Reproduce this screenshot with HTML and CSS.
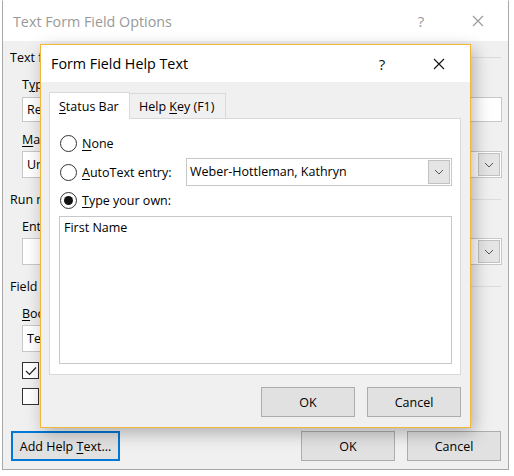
FILE: index.html
```html
<!DOCTYPE html>
<html>
<head>
<meta charset="utf-8">
<link rel="stylesheet" href="styles.css">
</head>
<body>
<div class="win outer">
  <div class="titlebar">
    <span class="wtitle">Text Form Field Options</span>
    <span class="tbtn help">?</span>
    <span class="tbtn close"><svg width="12" height="12" viewBox="0 0 12 12"><path d="M1 1 L11 11 M11 1 L1 11" stroke="#999" stroke-width="1.1" fill="none"/></svg></span>
  </div>
  <div class="obody">
    <div class="group"><span class="glabel">Text form field</span><span class="sep"></span></div>
    <div class="cols">
      <div class="col">
        <div class="flabel">T<u>y</u>pe:</div>
        <div class="field">Regular text</div>
        <div class="flabel second"><u>M</u>aximum length:</div>
        <div class="field sel"><span class="val">Unlimited</span><span class="dd"><svg width="10" height="6" viewBox="0 0 10 6"><path d="M1 1 L5 5 L9 1" stroke="#555" fill="none"/></svg></span></div>
      </div>
      <div class="col">
        <div class="flabel"><u>D</u>efault text:</div>
        <div class="field"></div>
        <div class="flabel second">Text <u>f</u>ormat:</div>
        <div class="field sel"><span class="val"></span><span class="dd"><svg width="10" height="6" viewBox="0 0 10 6"><path d="M1 1 L5 5 L9 1" stroke="#555" fill="none"/></svg></span></div>
      </div>
    </div>
    <div class="group g2"><span class="glabel">Run macro on</span><span class="sep"></span></div>
    <div class="cols">
      <div class="col">
        <div class="flabel">Ent<u>r</u>y:</div>
        <div class="field sel"><span class="val"></span><span class="dd"><svg width="10" height="6" viewBox="0 0 10 6"><path d="M1 1 L5 5 L9 1" stroke="#555" fill="none"/></svg></span></div>
      </div>
      <div class="col">
        <div class="flabel">E<u>x</u>it:</div>
        <div class="field sel"><span class="val"></span><span class="dd"><svg width="10" height="6" viewBox="0 0 10 6"><path d="M1 1 L5 5 L9 1" stroke="#555" fill="none"/></svg></span></div>
      </div>
    </div>
    <div class="group g3"><span class="glabel">Field settings</span><span class="sep"></span></div>
    <div class="cols">
      <div class="col">
        <div class="flabel"><u>B</u>ookmark:</div>
        <div class="field bm">Text1</div>
      </div>
    </div>
    <div class="check first"><span class="box"><svg width="14" height="14" viewBox="0 0 14 14"><path d="M2 7 L5.5 10.5 L12 3.5" stroke="#222" stroke-width="1.2" fill="none"/></svg></span><span>Fill-in enabled</span></div>
    <div class="check"><span class="box"></span><span>Calculate on exit</span></div>
    <div class="ofooter">
      <span class="btn focus"><span>Add Help <u>T</u>ext...</span></span>
      <span class="spacer"></span>
      <span class="btn"><span>OK</span></span>
      <span class="btn"><span>Cancel</span></span>
    </div>
  </div>
</div>

<div class="win inner">
  <div class="titlebar ititle">
    <span class="wtitle dark">Form Field Help Text</span>
    <span class="tbtn help dark">?</span>
    <span class="tbtn close"><svg width="12" height="12" viewBox="0 0 12 12"><path d="M1 1 L11 11 M11 1 L1 11" stroke="#111" stroke-width="1.1" fill="none"/></svg></span>
  </div>
  <div class="ibody">
    <div class="tabs">
      <span class="tab active"><span><u>S</u>tatus Bar</span></span>
      <span class="tab"><span>Help <u>K</u>ey (F1)</span></span>
    </div>
    <div class="panel">
      <div class="rrow r1"><span class="radio"></span><span><u>N</u>one</span></div>
      <div class="rrow r2"><span class="radio"></span><span><u>A</u>utoText entry:</span>
        <div class="combo"><span class="val">Weber-Hottleman, Kathryn</span><span class="dd"><svg width="10" height="6" viewBox="0 0 10 6"><path d="M1 1 L5 5 L9 1" stroke="#555" fill="none"/></svg></span></div>
      </div>
      <div class="rrow r3"><span class="radio on"></span><span><u>T</u>ype your own:</span></div>
      <div class="textarea">First Name</div>
    </div>
    <div class="ifooter">
      <span class="btn"><span>OK</span></span>
      <span class="btn"><span>Cancel</span></span>
    </div>
  </div>
</div>
</body>
</html>
```
FILE: styles.css
```css
* { box-sizing: border-box; }
body {
  margin: 0;
  background: #fff;
  font-family: "Open Sans", "Noto Sans", sans-serif;
  font-size: 12.5px;
  color: #000;
}
u { text-decoration: underline; text-underline-offset: 2px; text-decoration-thickness: 1px; }

.win { background: #f0f0f0; }
.outer {
  margin-left: 2px;
  width: 507px;
  height: 470px;
  border: 1px solid #a8a8a8;
  border-top-color: #fff;
  display: flex;
  flex-direction: column;
}
.titlebar {
  height: 40px;
  background: #fff;
  display: flex;
  align-items: center;
  padding-left: 10px;
  padding-right: 7px;
  flex: none;
}
.wtitle { flex: 1; font-size: 14.3px; color: #999; white-space: nowrap; }
.wtitle.dark { color: #000; }
.tbtn {
  width: 46px;
  text-align: center;
  font-size: 15px;
  color: #999;
  display: flex;
  justify-content: center;
  align-items: center;
}
.tbtn.help { margin-right: 11px; }
.tbtn.dark { color: #111; }

.obody {
  flex: 1;
  padding: 7px 7px 0 7px;
  display: flex;
  flex-direction: column;
}
.group { display: flex; align-items: center; height: 18px; gap: 6px; }
.glabel { white-space: nowrap; }
.sep { flex: 1; height: 1px; background: #dcdcdc; }
.g2, .g3 { margin-top: 12px; }

.cols { display: grid; grid-template-columns: 218px 240px; column-gap: 22px; padding-left: 12px; }
.col { display: flex; flex-direction: column; }
.flabel { height: 18px; line-height: 18px; margin-top: 10px; white-space: nowrap; }
.flabel.second { margin-top: 9px; }
.field {
  margin-top: 3px;
  height: 25px;
  background: #fff;
  border: 1px solid #c8c8c8;
  padding-left: 4px;
  line-height: 23px;
  white-space: nowrap;
  overflow: hidden;
  display: flex;
}
.field.sel { height: 27px; line-height: 25px; margin-top: 2px; }
.field.bm { margin-top: 2px; height: 27px; line-height: 25px; }
.val { flex: 1; }
.dd {
  width: 22px;
  margin: 1px;
  background: #e5e5e5;
  border: 1px solid #c2c2c2;
  display: flex;
  align-items: center;
  justify-content: center;
}

.check { display: flex; align-items: center; gap: 8px; margin-left: 12px; height: 17px; }
.check.first { margin-top: 10px; }
.check + .check { margin-top: 9px; }
.box {
  width: 17px; height: 17px;
  border: 1px solid #333;
  background: #fff;
  display: flex; align-items: center; justify-content: center;
}

.ofooter { margin-top: 26px; display: flex; gap: 12px; }
.spacer { flex: 1; }
.btn {
  width: 94px;
  height: 30px;
  background: #e1e1e1;
  border: 1px solid #adadad;
  display: flex;
  align-items: center;
  justify-content: center;
  white-space: nowrap;
}
.btn.focus { width: 109px; border: 2px solid #0078d7; margin-left: 1px; }

.inner {
  position: absolute;
  left: 40px;
  top: 44px;
  width: 431px;
  height: 384px;
  border: 1px solid #f0b73a;
  box-shadow: 3px 5px 16px rgba(0,0,0,0.28);
  display: flex;
  flex-direction: column;
}
.ititle { height: 37px; padding-left: 10px; padding-right: 8px; }
.ibody { flex: 1; padding: 10px 9px 0 8px; display: flex; flex-direction: column; }
.tabs { display: flex; align-items: flex-end; height: 26px; position: relative; z-index: 1; }
.tab {
  height: 25px;
  padding: 0 9px;
  border: 1px solid #d9d9d9;
  border-bottom: none;
  border-left: none;
  background: #f0f0f0;
  display: flex;
  align-items: center;
  width: 96px;
  white-space: nowrap;
}
.tab.active {
  height: 27px;
  width: 81px;
  margin-bottom: -1px;
  background: #fff;
  border-left: 1px solid #d9d9d9;
}
.panel {
  width: 412px;
  height: 257px;
  background: #fff;
  border: 1px solid #d9d9d9;
  padding: 14px 8px 0 10px;
  display: flex;
  flex-direction: column;
}
.rrow { display: flex; align-items: center; gap: 5px; white-space: nowrap; }
.r1 { height: 20px; }
.r2 { height: 28px; margin-top: 5px; }
.r3 { height: 18px; margin-top: 5px; }
.radio {
  width: 17px; height: 17px;
  border: 1px solid #333;
  border-radius: 50%;
  background: #fff;
  display: flex; align-items: center; justify-content: center;
  flex: none;
}
.radio.on::after {
  content: "";
  width: 9px; height: 9px;
  border-radius: 50%;
  background: #111;
}
.combo {
  margin-left: auto;
  width: 266px;
  height: 28px;
  border: 1px solid #c8c8c8;
  background: #fff;
  display: flex;
  padding-left: 3px;
  line-height: 26px;
}
.textarea {
  margin-top: 7px;
  margin-left: -1px;
  height: 148px;
  border: 1px solid #c8c8c8;
  background: #fff;
  padding: 2px 4px;
}
.ifooter { margin-top: 12px; display: flex; justify-content: flex-end; gap: 12px; }
```
